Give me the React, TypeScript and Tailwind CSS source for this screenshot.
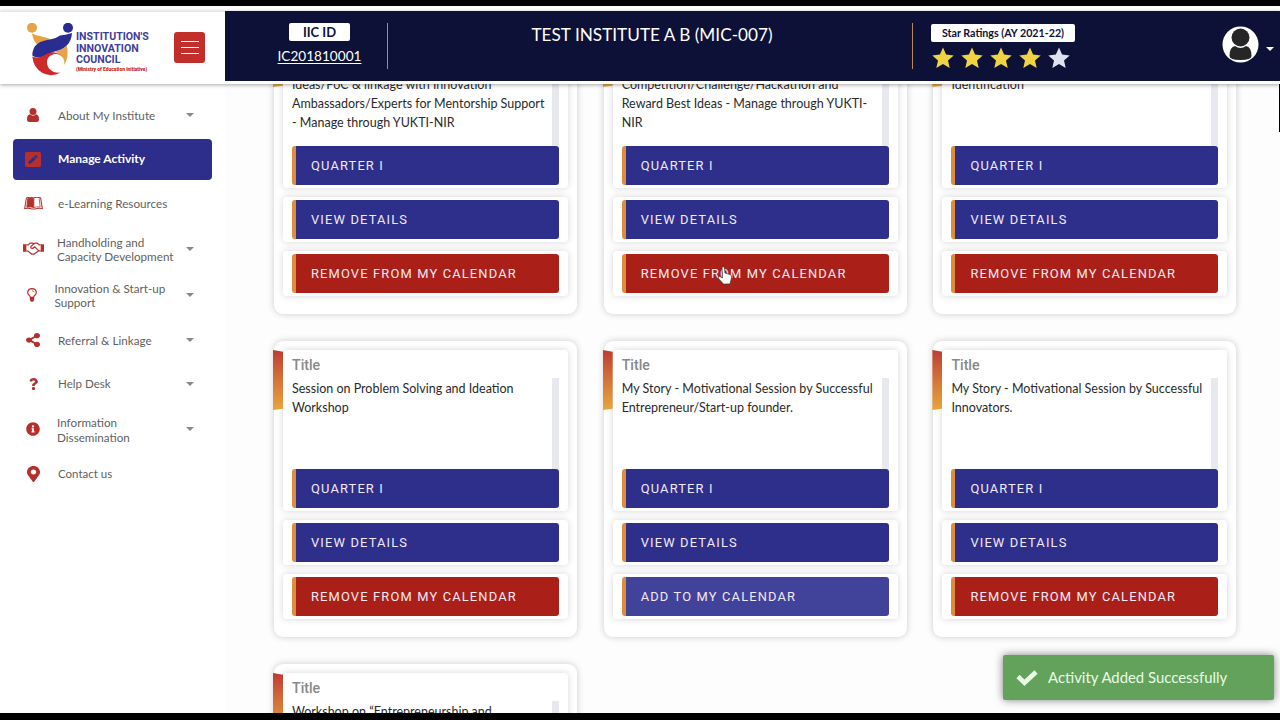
import { FaInfoCircle, FaMapMarkerAlt, FaPenSquare, FaQuestion, FaShareAlt } from "react-icons/fa";
import type { ComponentType, SVGProps } from "react";

type IconProps = SVGProps<SVGSVGElement>;

function UserIcon(props: IconProps) {
    return (
        <svg viewBox="0 0 12 14" fill="currentColor" {...props}>
            <circle cx="6" cy="3.600" r="3.500" />
            <path d="M3 6.300 Q6 9 9 6.300 Q12 6.800 12 11.500 Q12 14 9.500 14 H2.500 Q0 14 0 11.500 Q0 6.800 3 6.300 Z" />
        </svg>
    );
}

function BookIcon(props: IconProps) {
    return (
        <svg viewBox="0 0 20 14" fill="none" stroke="currentColor" {...props}>
            <path d="M2.500 1 Q7 -0.500 10 1.200 Q13 -0.500 17.500 1 L19.300 12.500 Q14 11.500 11.500 13 H8.500 Q6 11.500 0.700 12.500 Z" strokeWidth="1.100" />
            <path d="M4 1.800 Q8 1 10.300 2 V11.300 Q7 10 3 11 Z" fill="currentColor" strokeWidth="1" />
            <path d="M16 1.500 L17 10.800 Q13 10 10.300 11.500" strokeWidth="0.800" />
        </svg>
    );
}

function HandshakeIcon(props: IconProps) {
    return (
        <svg viewBox="0 0 22 14" fill="none" stroke="currentColor" strokeWidth="1.300" {...props}>
            <path d="M0 2.500 H3.500 V10.500 H0 Z M22 2.500 H18.500 V10.500 H22 Z" fill="currentColor" stroke="none" />
            <path d="M3.500 3.200 H5.500 L7.500 1.200 H10 L11 2 L12.500 1.200 H14.800 L17 3.200 H18.500 M3.500 9.800 H5.200 L9 13 H11.500 L16.500 9.500 H18.500" />
            <path d="M11.500 2 L8.200 5 Q8 7.300 10.300 6.800 L12.300 5.300 L16.500 9.500" />
        </svg>
    );
}

function BulbIcon(props: IconProps) {
    return (
        <svg viewBox="0 0 10 14" fill="none" stroke="currentColor" {...props}>
            <path d="M3.300 9.300 Q3.200 8 1.700 6.800 Q0.600 5.500 0.700 4.300 Q1.200 0.800 5 0.700 Q8.800 0.800 9.300 4.300 Q9.400 5.500 8.300 6.800 Q6.800 8 6.700 9.300 Z" strokeWidth="1.200" />
            <path d="M5 2.700 Q6.800 2.800 7.200 4.300" strokeWidth="0.700" />
            <path d="M2.800 9.500 H7.200 V12 L6 13.800 H4 L2.800 12 Z" fill="currentColor" stroke="none" />
        </svg>
    );
}

type MenuItem = {
    label: string[];
    icon: ComponentType<IconProps>;
    iconClass: string;
    rowClass: string;
    textClass: string;
    arrow?: boolean;
    active?: boolean;
};

const menu: MenuItem[] = [
    { label: ["About My Institute"], icon: UserIcon, iconClass: "w-[12px] h-[14px]", rowClass: "h-[44px]", textClass: "ml-[5px] text-[11.700px]", arrow: true },
    { label: ["Manage Activity"], icon: FaPenSquare, iconClass: "w-[16px] h-[17px]", rowClass: "h-[44px]", textClass: "ml-[5px] text-[12px]", active: true },
    { label: ["e-Learning Resources"], icon: BookIcon, iconClass: "w-[19px] h-[13px]", rowClass: "h-[44px]", textClass: "ml-[5px] text-[11.700px]" },
    { label: ["Handholding and", "Capacity Development"], icon: HandshakeIcon, iconClass: "w-[21px] h-[13px]", rowClass: "h-[47px]", textClass: "ml-[4px] text-[11.700px]", arrow: true },
    { label: ["Innovation & Start-up", "Support"], icon: BulbIcon, iconClass: "w-[10px] h-[14px] -ml-[3px]", rowClass: "h-[45px]", textClass: "ml-[1.500px] text-[11.700px]", arrow: true },
    { label: ["Referral & Linkage"], icon: FaShareAlt, iconClass: "w-[14px] h-[14px]", rowClass: "h-[45px]", textClass: "ml-[5px] text-[11.700px]", arrow: true },
    { label: ["Help Desk"], icon: FaQuestion, iconClass: "w-[9px] h-[12px]", rowClass: "h-[44px]", textClass: "ml-[5px] text-[11.600px]", arrow: true },
    { label: ["Information", "Dissemination"], icon: FaInfoCircle, iconClass: "w-[14px] h-[14px] -ml-[1px]", rowClass: "h-[46px]", textClass: "ml-[4px] text-[11.700px]", arrow: true },
    { label: ["Contact us"], icon: FaMapMarkerAlt, iconClass: "w-[13px] h-[16px]", rowClass: "h-[44px]", textClass: "ml-[5px] text-[11.500px]" },
];

type Activity = { lines: string[]; added: boolean };

const activities: Activity[] = [
    { lines: ["Mentoring Event: Demo Day/Exhibition of", "Ideas/PoC & linkage with Innovation", "Ambassadors/Experts for Mentorship Support", "- Manage through YUKTI-NIR"], added: true },
    { lines: ["Organize an Inter/Intra Institutional", "Competition/Challenge/Hackathon and", "Reward Best Ideas - Manage through YUKTI-", "NIR"], added: true },
    { lines: ["Field/Exposure Visit for Problem", "Identification"], added: true },
    { lines: ["Session on Problem Solving and Ideation", "Workshop"], added: true },
    { lines: ["My Story - Motivational Session by Successful", "Entrepreneur/Start-up founder."], added: false },
    { lines: ["My Story - Motivational Session by Successful", "Innovators."], added: true },
    { lines: ["Workshop on “Entrepreneurship and", "Innovation” as Career Opportunity"], added: true },
];

function Logo() {
    return (
        <div className="flex items-start">
            <svg width="48" height="54" viewBox="0 0 48 54">
                <circle cx="5" cy="4.800" r="5" fill="#e6a444" />
                <circle cx="41" cy="4.800" r="5" fill="#2b2c8f" />
                <path d="M5 10.300 Q8 12.500 13 13 Q19 14.500 24 16.300 Q17 17 11 22.500 Q6 18 5 10.300 Z" fill="#e6a444" />
                <path d="M28 28.500 Q35 27 39.700 22.500 Q42.500 32 37.500 42 Q38.500 34 28 28.500 Z" fill="#e6a444" />
                <path d="M45 10 Q44.500 18 39.700 22.500 Q35 27 26 29 Q20 32 15 34 Q9 35.500 5.300 32.500 Q5.500 24 11 20.500 Q15 17.500 24 16.300 Q29 15.500 33 12.500 Q38 12 45 10 Z" fill="#2b2c8f" />
                <path d="M5.300 33.500 Q11 36 17 32.500 Q25 27 32 31 Q34 32 34.700 33 C27 28 19.500 33 20 40 C20.500 46 26 50.500 33.500 49.500 Q25 54.500 15.500 50 Q6.500 45 5.300 33.500 Z" fill="#cf2a2a" />
            </svg>
            <div className="ml-[1px] mt-[8px] whitespace-nowrap font-[Roboto] text-[10.600px] font-bold leading-[11.600px] text-[#3f409c]">
                <p>INSTITUTION'S</p>
                <p>INNOVATION</p>
                <p>COUNCIL</p>
                <p className="text-[4.900px] font-black leading-[6px] text-[#c62828]">(Ministry of Education Initiative)</p>
            </div>
        </div>
    );
}

function Star({ filled }: { filled: boolean }) {
    return (
        <svg className={filled ? "text-[#f0d343]" : "text-[#dde2ee]"} width="22" height="22" viewBox="0 0 22 22" fill="currentColor">
            <path d="M11 0.500 L14.100 7.600 L21.700 8.400 L16 13.500 L17.700 21 L11 17.100 L4.300 21 L6 13.500 L0.300 8.400 L7.900 7.600 Z" />
        </svg>
    );
}

function Header() {
    return (
        <header className="relative z-10 flex h-[73px] shrink-0 border-b-[3px] border-white bg-white shadow-[0_1px_4px_rgba(0,0,0,0.35)]">
            <div className="flex w-[225px] shrink-0 items-start border-t border-gray-200 pl-[27px] pt-[11px]">
                <Logo />
                <div className="ml-auto mr-[20px] mt-[9px] flex h-[31px] w-[31px] flex-col items-center justify-center gap-[4.500px] rounded-[3px] bg-[#c22f2b]">
                    <span className="h-[1.500px] w-[18px] bg-white"></span>
                    <span className="h-[1.500px] w-[18px] bg-white"></span>
                    <span className="h-[1.500px] w-[18px] bg-white"></span>
                </div>
            </div>

            <div className="flex flex-1 bg-[#0d1137] text-white">
                <div className="my-[12px] flex w-[163px] flex-col items-center border-r border-[#b98a4a] pl-[27px]">
                    <p className="h-[18px] w-[61px] rounded-[2px] bg-white text-center text-[13px] font-bold leading-[18px] text-[#0d1137]">IIC ID</p>
                    <p className="mt-[6px] text-[13.600px] leading-[18px] underline underline-offset-2">IC201810001</p>
                </div>
                <div className="my-[12px] flex w-[525px] justify-center border-r border-[#b98a4a] pl-[4px]">
                    <h1 className="mt-[1px] whitespace-nowrap text-[17.200px] leading-[22px]">TEST INSTITUTE A B (MIC-007)</h1>
                </div>
                <div className="ml-[18px] mt-[13px]">
                    <p className="h-[18px] w-[144px] whitespace-nowrap rounded-[2px] bg-white text-center text-[10.700px] font-bold leading-[18px] text-[#0d1137]">Star Ratings (AY 2021-22)</p>
                    <div className="ml-[1px] mt-[5px] flex gap-[7px]">
                        {[1, 2, 3, 4, 5].map((n) => (
                            <Star key={n} filled={n < 5} />
                        ))}
                    </div>
                </div>
                <div className="ml-auto mr-[6px] mt-[15px] flex items-start">
                    <svg width="37" height="37" viewBox="0 0 37 37">
                        <circle cx="18.500" cy="18.500" r="18" fill="#fff" />
                        <circle cx="18.500" cy="11.500" r="9" fill="#262626" />
                        <path d="M7.500 30 Q7.500 21 13 20 Q18.500 24 24 20 Q29.500 21 29.500 30 Q29.500 34 18.500 34 Q7.500 34 7.500 30 Z" fill="#262626" />
                    </svg>
                    <span className="ml-[7px] mt-[21px] border-x-[4px] border-t-[4px] border-x-transparent border-t-white"></span>
                </div>
            </div>
        </header>
    );
}

function Sidebar() {
    return (
        <aside className="w-[225px] shrink-0 bg-white pl-[13px] pr-[13px] pt-[9px] text-[#5f5f5f]">
            {menu.map((item) => {
                const Icon = item.icon;
                return (
                    <div key={item.label[0]} className={`flex items-center ${item.rowClass}`}>
                        <div className={item.active ? "flex h-[41px] w-full items-center rounded-[4px] bg-[#2d2d8b] font-bold text-white" : "flex w-full items-center"}>
                            <span className="flex w-[40px] justify-center">
                                <Icon className={`text-[#b5302c] ${item.iconClass}`} preserveAspectRatio="none" />
                            </span>
                            <span className={`mt-[1px] whitespace-nowrap leading-[14.500px] ${item.textClass}`}>
                                {item.label.map((line) => (
                                    <span key={line} className="block">{line}</span>
                                ))}
                            </span>
                            {item.arrow && (
                                <span className="ml-auto mr-[18px] border-x-[4px] border-t-[4px] border-x-transparent border-t-[#888]"></span>
                            )}
                        </div>
                    </div>
                );
            })}
        </aside>
    );
}

function CardButton({ text, color }: { text: string; color: string }) {
    return (
        <button className={`block h-[39px] w-full whitespace-nowrap rounded-[3px] border-l-[4px] border-[#dd8d3c] pl-[15px] text-left font-[Roboto] text-[12.900px] tracking-[1.150px] text-[#f3e9f5] ${color}`}>
            {text}
        </button>
    );
}

function ActivityCard({ activity }: { activity: Activity }) {
    return (
        <div className="relative flex h-[296px] flex-col gap-[9px] rounded-[9px] bg-white px-[9px] pt-[9px] shadow-[0_0_7px_rgba(0,0,0,0.2)]">
            <span className="absolute left-[-1px] top-[9px] h-[60px] w-[10px] bg-gradient-to-b from-[#bd3b32] to-[#e6a63d] [clip-path:polygon(0_0,100%_3%,100%_98%,0_100%)]"></span>
            <div className="h-[161px] rounded-[4px] bg-white px-[9px] pt-[7px] shadow-[0_0_7px_rgba(0,0,0,0.17)]">
                <h3 className="h-[21px] font-[Roboto] text-[14.200px] font-medium leading-[17px] text-[#888]">Title</h3>
                <div className="flex h-[91px] justify-between overflow-hidden">
                    <div className="mt-px whitespace-nowrap text-[12.500px] leading-[19px] text-[#2a2a2a]">
                        {activity.lines.map((line) => (
                            <p key={line}>{line}</p>
                        ))}
                    </div>
                    <span className="w-[7px] shrink-0 bg-[#e8e8ef]"></span>
                </div>
                <CardButton text="QUARTER I" color="bg-[#2d2f8b]" />
            </div>
            <div className="h-[45px] rounded-[4px] bg-white px-[9px] py-[3px] shadow-[0_0_7px_rgba(0,0,0,0.17)]">
                <CardButton text="VIEW DETAILS" color="bg-[#2d2f8b]" />
            </div>
            <div className="h-[45px] rounded-[4px] bg-white px-[9px] py-[3px] shadow-[0_0_7px_rgba(0,0,0,0.17)]">
                {activity.added ? (
                    <CardButton text="REMOVE FROM MY CALENDAR" color="bg-[#aa2018]" />
                ) : (
                    <CardButton text="ADD TO MY CALENDAR" color="bg-[#41429a]" />
                )}
            </div>
        </div>
    );
}

export default function App() {
    return (
        <div className="relative flex h-[720px] w-[1280px] flex-col overflow-hidden border-b-[7px] border-t-[6px] border-black bg-white font-[Lato,sans-serif]">
            <div className="h-[5px] shrink-0 bg-white"></div>
            <Header />
            <div className="flex min-h-0 flex-1">
                <Sidebar />
                <main className="flex-1 overflow-hidden bg-[#fdfdfd]">
                    <div className="-mt-[66px] ml-[49px] grid grid-cols-[303px_303px_303px] gap-x-[26.700px] gap-y-[27px]">
                        {activities.map((activity, i) => (
                            <ActivityCard key={i} activity={activity} />
                        ))}
                    </div>
                </main>
            </div>

            {/* Scrollbar thumb */}
            <span className="absolute right-0 top-[78px] h-[48px] w-[1px] bg-black"></span>

            {/* Mouse pointer */}
            <svg className="absolute left-[717px] top-[260px]" width="16" height="20" viewBox="0 0 16 20">
                <path d="M5 1 Q7 0 7.500 2 L8 7 L13 8.500 Q15 9 14.500 12 L13 18 L6.500 18 L1 12 Q1 10 3 10.500 L5.500 12 Z" fill="#fff" stroke="#333" strokeWidth="0.700" />
            </svg>

            {/* Toast */}
            <div className="absolute left-[1003px] top-[649px] flex h-[45px] w-[271px] items-center rounded-[2px] bg-[#62a25b] text-[#e9fbe6] shadow-[0_0_8px_rgba(0,0,0,0.5)]">
                <svg className="ml-[13px]" width="22" height="16" viewBox="0 0 22 16" fill="none" stroke="currentColor" strokeWidth="4.600">
                    <path d="M2 6.500 L8.500 12.800 L20 2" />
                </svg>
                <span className="ml-[10px] whitespace-nowrap text-[14.900px]">Activity Added Successfully</span>
            </div>
        </div>
    );
}
